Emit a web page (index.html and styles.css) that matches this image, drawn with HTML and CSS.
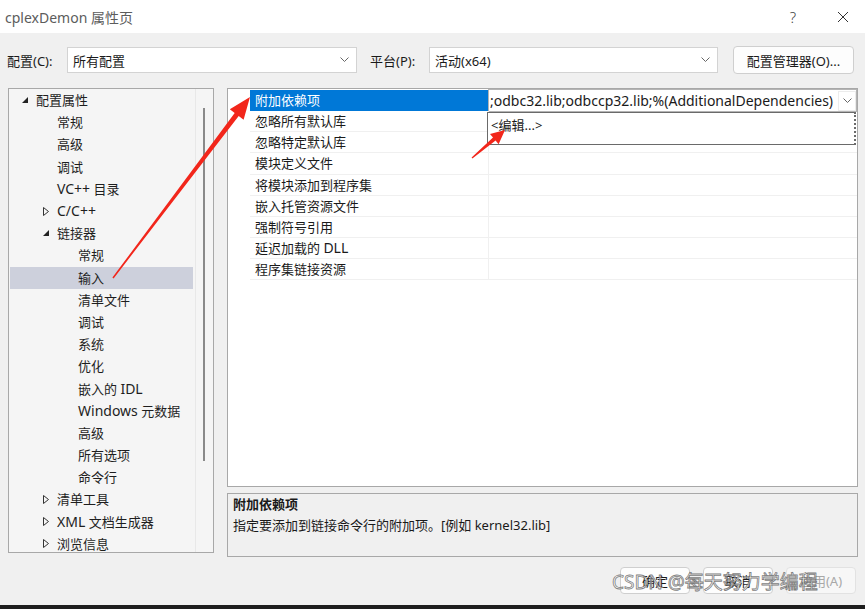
FILE: index.html
```html
<!DOCTYPE html>
<html lang="zh-CN">
<head>
<meta charset="utf-8">
<title>cplexDemon 属性页</title>
<link rel="stylesheet" href="styles.css">
</head>
<body>
<div class="window">
  <div class="titlebar">
    <span class="title">cplexDemon 属性页</span>
    <span class="tb-btn help">?</span>
    <span class="tb-btn close">
      <svg width="12" height="12" viewBox="0 0 12 12"><path d="M1 1 L11 11 M11 1 L1 11" stroke="#333" stroke-width="1" fill="none"/></svg>
    </span>
  </div>

  <div class="configrow">
    <span class="label lbl1">配置(C):</span>
    <div class="combo combo1"><span class="combo-text">所有配置</span><span class="chev"><svg width="9" height="6" viewBox="0 0 9 6"><path d="M0.5 0.5 L4.5 4.5 L8.5 0.5" stroke="#666" fill="none"/></svg></span></div>
    <span class="label lbl2">平台(P):</span>
    <div class="combo combo2"><span class="combo-text">活动(x64)</span><span class="chev"><svg width="9" height="6" viewBox="0 0 9 6"><path d="M0.5 0.5 L4.5 4.5 L8.5 0.5" stroke="#666" fill="none"/></svg></span></div>
    <button class="btn mgr">配置管理器(O)...</button>
  </div>

  <div class="main">
    <div class="tree">
      <div class="tree-list">
        <div class="node l0"><span class="tw"><svg width="6" height="6" viewBox="0 0 6 6"><path d="M6 0 L6 6 L0 6 Z" fill="#222"/></svg></span>配置属性</div>
        <div class="node l1"><span class="tw"></span>常规</div>
        <div class="node l1"><span class="tw"></span>高级</div>
        <div class="node l1"><span class="tw"></span>调试</div>
        <div class="node l1"><span class="tw"></span><span class="lat">VC++</span>&nbsp;目录</div>
        <div class="node l1"><span class="tw"><svg width="6" height="9" viewBox="0 0 6 9"><path d="M0.5 0.5 L5.5 4.5 L0.5 8.5 Z" fill="none" stroke="#333"/></svg></span><span class="lat">C/C++</span></div>
        <div class="node l1"><span class="tw"><svg width="6" height="6" viewBox="0 0 6 6"><path d="M6 0 L6 6 L0 6 Z" fill="#222"/></svg></span>链接器</div>
        <div class="node l2"><span class="tw"></span>常规</div>
        <div class="node l2 selected"><span class="tw"></span>输入</div>
        <div class="node l2"><span class="tw"></span>清单文件</div>
        <div class="node l2"><span class="tw"></span>调试</div>
        <div class="node l2"><span class="tw"></span>系统</div>
        <div class="node l2"><span class="tw"></span>优化</div>
        <div class="node l2"><span class="tw"></span>嵌入的&nbsp;<span class="lat">IDL</span></div>
        <div class="node l2"><span class="tw"></span><span class="lat">Windows</span>&nbsp;元数据</div>
        <div class="node l2"><span class="tw"></span>高级</div>
        <div class="node l2"><span class="tw"></span>所有选项</div>
        <div class="node l2"><span class="tw"></span>命令行</div>
        <div class="node l1"><span class="tw"><svg width="6" height="9" viewBox="0 0 6 9"><path d="M0.5 0.5 L5.5 4.5 L0.5 8.5 Z" fill="none" stroke="#333"/></svg></span>清单工具</div>
        <div class="node l1"><span class="tw"><svg width="6" height="9" viewBox="0 0 6 9"><path d="M0.5 0.5 L5.5 4.5 L0.5 8.5 Z" fill="none" stroke="#333"/></svg></span><span class="lat">XML</span>&nbsp;文档生成器</div>
        <div class="node l1"><span class="tw"><svg width="6" height="9" viewBox="0 0 6 9"><path d="M0.5 0.5 L5.5 4.5 L0.5 8.5 Z" fill="none" stroke="#333"/></svg></span>浏览信息</div>
      </div>
      <div class="tree-scroll"><div class="thumb"></div></div>
    </div>

    <div class="right">
      <div class="grid">
        <div class="row sel">
          <div class="gutter"></div>
          <div class="name">附加依赖项</div>
          <div class="value editing"><span class="vtext">;odbc32.lib;odbccp32.lib;%(AdditionalDependencies)</span><span class="vchev"><svg width="9" height="6" viewBox="0 0 9 6"><path d="M0.5 0.5 L4.5 4.5 L8.5 0.5" stroke="#666" fill="none"/></svg></span></div>
        </div>
        <div class="row"><div class="gutter"></div><div class="name">忽略所有默认库</div><div class="value"></div></div>
        <div class="row"><div class="gutter"></div><div class="name">忽略特定默认库</div><div class="value"></div></div>
        <div class="row"><div class="gutter"></div><div class="name">模块定义文件</div><div class="value"></div></div>
        <div class="row"><div class="gutter"></div><div class="name">将模块添加到程序集</div><div class="value"></div></div>
        <div class="row"><div class="gutter"></div><div class="name">嵌入托管资源文件</div><div class="value"></div></div>
        <div class="row"><div class="gutter"></div><div class="name">强制符号引用</div><div class="value"></div></div>
        <div class="row"><div class="gutter"></div><div class="name">延迟加载的&nbsp;<span class="lat">DLL</span></div><div class="value"></div></div>
        <div class="row"><div class="gutter"></div><div class="name">程序集链接资源</div><div class="value"></div></div>
        <div class="dropdown"><span class="ddtext">&lt;编辑...&gt;</span></div>
      </div>
      <div class="desc">
        <div class="desc-title">附加依赖项</div>
        <div class="desc-text">指定要添加到链接命令行的附加项。[例如 kernel32.lib]</div>
      </div>
    </div>
  </div>

  <div class="buttons">
    <button class="btn dlg">确定</button>
    <button class="btn dlg">取消</button>
    <button class="btn dlg disabled">应用(A)</button>
  </div>
</div>
<div class="bottom-edge"></div>

<div class="watermark">CSDN @每天努力学编程</div>

<svg class="arrows" width="865" height="609" viewBox="0 0 865 609">
  <polygon points="113.6,278.4 238.7,116.0 243.6,119.8 250,97 229.8,109.3 234.7,113.0 112.4,277.6" fill="#f2261b"/>
  <polygon points="472.4,158.5 495.6,140.6 498.6,144.2 505,130 490,134.1 493.0,137.6 471.6,157.5" fill="#f2261b"/>
</svg>
</body>
</html>
```

FILE: styles.css
```css
* { box-sizing: border-box; }
html, body { margin: 0; padding: 0; }
body {
  width: 865px;
  height: 609px;
  overflow: hidden;
  background: #f0f0f0;
  font-family: "Noto Sans", "Noto Sans CJK SC", sans-serif;
  font-size: 13px;
  color: #1a1a1a;
  position: relative;
}
.lat { font-size: 14px; }
.window {
  height: 605px;
  display: flex;
  flex-direction: column;
}
.titlebar {
  height: 33px;
  background: #ffffff;
  display: flex;
  align-items: center;
  padding-left: 5px;
}
.title {
  flex: 1;
  color: #5c5c5c;
  font-size: 14px;
}
.tb-btn {
  display: flex;
  justify-content: center;
  align-items: center;
  color: #444;
}
.help { width: 56px; font-size: 15px; font-weight: 300; }
.close { width: 44px; }

.configrow {
  margin-top: 13px;
  height: 28px;
  display: flex;
  align-items: center;
  padding-left: 7px;
}
.label { display: inline-block; }
.lbl1 { width: 60px; }
.lbl2 { width: 59px; margin-left: 13px; }
.combo {
  height: 26px;
  background: #fff;
  border: 1px solid #d3d3d3;
  display: flex;
  align-items: center;
  padding-left: 5px;
}
.combo1 { width: 290px; }
.combo2 { width: 289px; }
.combo-text { flex: 1; }
.chev { width: 16px; display: flex; align-items: center; }
.btn {
  font-family: inherit;
  font-size: 13px;
  color: #1a1a1a;
  background: #fdfdfd;
  border: 1px solid #cfcfcf;
  border-radius: 4px;
  padding: 0;
}
.mgr {
  margin-left: 15px;
  width: 121px;
  height: 28px;
}

.main {
  margin-top: 14px;
  padding-left: 8px;
  display: flex;
  gap: 13px;
}
.tree {
  width: 206px;
  height: 465px;
  border: 1px solid #a8a8a8;
  background: #f5f5f5;
  display: flex;
}
.tree-list {
  width: 186px;
}
.node {
  height: 22.2px;
  line-height: 22px;
  display: flex;
  align-items: center;
  white-space: nowrap;
  color: #1e1e1e;
}
.tw {
  width: 14px;
  flex: none;
  display: flex;
  align-items: center;
}
.l0 { padding-left: 13px; }
.l1 { padding-left: 34px; }
.l2 { padding-left: 55px; }
.node.selected {
  background: #cdd0dc;
  margin-left: 1px;
  margin-right: 2px;
  padding-left: 54px;
}
.tree-scroll {
  flex: 1;
  border-left: 1px solid #e8e8e8;
  padding-top: 19px;
  padding-left: 7px;
}
.thumb {
  width: 2px;
  height: 353px;
  background: #8a8a8a;
}

.right {
  width: 631px;
  display: flex;
  flex-direction: column;
  gap: 6px;
}
.grid {
  height: 399px;
  border: 1px solid #a8a8a8;
  background: #ffffff;
  padding-top: 1px;
  position: relative;
}
.row {
  height: 21.15px;
  display: flex;
}
.gutter { width: 22px; flex: none; }
.name {
  width: 238px;
  flex: none;
  padding-left: 5px;
  line-height: 20px;
  border-bottom: 1px solid #f0f0f0;
  white-space: nowrap;
}
.value {
  flex: 1;
  border-bottom: 1px solid #f0f0f0;
  border-left: 1px solid #f0f0f0;
}
.row.sel .name {
  background: #0078d7;
  color: #ffffff;
  border-bottom: 1px solid #0078d7;
}
.value.editing {
  border: 1px solid #b4b4b4;
  margin-top: -1px;
  height: 23px;
  display: flex;
  align-items: center;
  padding-left: 1px;
  overflow: hidden;
  white-space: nowrap;
}
.vtext {
  flex: 1;
  overflow: hidden;
  font-size: 14px;
  color: #1a1a1a;
}
.vchev {
  width: 18px;
  height: 20px;
  border: 1px solid #ececec;
  display: flex;
  align-items: center;
  justify-content: center;
}
.dropdown {
  position: absolute;
  left: 259px;
  top: 23px;
  width: 369px;
  height: 33px;
  background: #ffffff;
  border: 1px solid #6a6a6a;
  border-right: 2px dotted #6a6a6a;
  padding: 2px 3px;
  line-height: 20px;
}
.desc {
  height: 64px;
  border: 1px solid #a8a8a8;
  background: #f0f0f0;
  padding: 0 5px;
  line-height: 21px;
}
.desc-title { font-weight: bold; }

.buttons {
  margin-top: 10px;
  display: flex;
  justify-content: flex-end;
  gap: 13px;
  padding-right: 9px;
}
.dlg {
  width: 70px;
  height: 27px;
}
.dlg.disabled {
  color: #a8a8a8;
  border-color: #e2e2e2;
  background: #f7f7f7;
}
.bottom-edge {
  height: 4px;
  background: #1e1e1e;
}
.watermark {
  position: absolute;
  left: 612px;
  top: 567px;
  font-size: 19px;
  color: rgba(255, 255, 255, 0.6);
  -webkit-text-stroke: 0.8px rgba(90, 90, 90, 0.8);
  white-space: nowrap;
}
.arrows {
  position: absolute;
  left: 0;
  top: 0;
  pointer-events: none;
}
```
